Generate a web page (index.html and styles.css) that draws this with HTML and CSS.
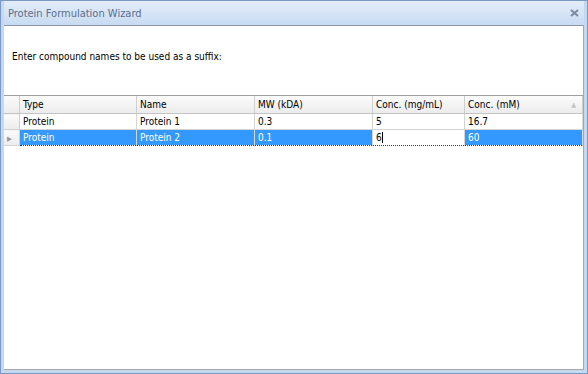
FILE: index.html
```html
<!DOCTYPE html>
<html lang="en">
<head>
    <meta charset="UTF-8">
    <title>Protein Formulation Wizard</title>
    <link rel="stylesheet" href="styles.css">
</head>
<body>
    <!-- wizard window -->
    <div class="window">
        <div class="titlebar">
            <span class="title">Protein Formulation Wizard</span>
            <svg class="close" width="9" height="8" viewBox="0 0 9 8">
                <path d="M1 1 L8 7 M8 1 L1 7" stroke="#7a8aa0" stroke-width="2" fill="none"/>
            </svg>
        </div>
        <div class="client">
            <p class="prompt">Enter compound names to be used as a suffix:</p>

            <!-- compound grid -->
            <div class="grid">
                <table>
                    <tr class="head">
                        <th class="rowhead"></th>
                        <th class="c-type">Type</th>
                        <th class="c-name">Name</th>
                        <th class="c-mw">MW (kDA)</th>
                        <th class="c-mg">Conc. (mg/mL)</th>
                        <th class="c-mm">Conc. (mM) <span class="sort">&#9650;</span></th>
                    </tr>
                    <tr>
                        <td class="rowhead"></td>
                        <td>Protein</td>
                        <td>Protein 1</td>
                        <td>0.3</td>
                        <td>5</td>
                        <td>16.7</td>
                    </tr>
                    <tr class="selected">
                        <td class="rowhead"><span class="marker">&#9654;</span></td>
                        <td>Protein</td>
                        <td>Protein 2</td>
                        <td>0.1</td>
                        <td class="editing">6<span class="caret"></span></td>
                        <td>60</td>
                    </tr>
                </table>
            </div>
        </div>
    </div>
</body>
</html>
```
FILE: styles.css
```css
/* window frame */
body {
    margin: 0;
    font-family: "DejaVu Sans Condensed", "DejaVu Sans", sans-serif;
    font-size: 10px;
    background-color: #ffffff;
}

.window {
    width: 588px;
    height: 374px;
    box-sizing: border-box;
    border: 1px solid #7b98c2;
    background-color: #c4d8f0;
    padding: 0 3px 3px 3px;
    display: flex;
    flex-direction: column;
}

.titlebar {
    height: 24px;
    display: flex;
    align-items: center;
    justify-content: space-between;
    padding: 0 5px 0 4px;
    background: linear-gradient(#e3edf9, #c8dbf2);
}

.title {
    color: #5a6e8c;
    font-size: 11px;
}

/* white area */
.client {
    flex: 1;
    background-color: #ffffff;
    border-top: 1px solid #8c96a4;
    border-right: 1px solid #a8a8a8;
    border-bottom: 1px solid #a8a8a8;
    display: flex;
    flex-direction: column;
}

.prompt {
    margin: 24px 0 0 8px;
    height: 13px;
    line-height: 13px;
    color: #000000;
}

.grid {
    margin-top: 32px;
    flex: 1;
    border-top: 1px solid #a0a0a0;
}

table {
    border-collapse: collapse;
    width: 100%;
    table-layout: fixed;
}

th,
td {
    text-align: left;
    font-weight: normal;
    padding: 0 0 0 3px;
    border-right: 1px solid #d4d4d4;
    border-bottom: 1px solid #d4d4d4;
    white-space: nowrap;
    overflow: hidden;
}

.head th {
    height: 17px;
    background: linear-gradient(#fbfbfb, #ececec);
    border-right: 1px solid #cfcfcf;
    border-bottom: 1px solid #c4c4c4;
}

td {
    height: 15px;
}

.rowhead {
    width: 12px;
    background: linear-gradient(#fbfbfb, #ececec);
    border-right: 1px solid #cfcfcf;
}

.c-type { width: 113px; }
.c-name { width: 114px; }
.c-mw { width: 114px; }
.c-mg { width: 88px; }

.sort {
    float: right;
    color: #c6c6c6;
    font-size: 7px;
    margin: 2px 6px 0 0;
}

.marker {
    color: #9a9a9a;
    font-size: 7px;
}

.selected td {
    background-color: #3399ff;
    color: #ffffff;
    border-top: 1px dotted #1a3d66;
    border-bottom: 1px dotted #1a3d66;
}

.selected .rowhead {
    background: linear-gradient(#fbfbfb, #ececec);
    border-top: 1px solid #d4d4d4;
    border-bottom: 1px solid #d4d4d4;
}

.selected .editing {
    background-color: #ffffff;
    color: #000000;
}

.caret {
    display: inline-block;
    width: 1px;
    height: 11px;
    background-color: #000000;
    vertical-align: -2px;
}
```
